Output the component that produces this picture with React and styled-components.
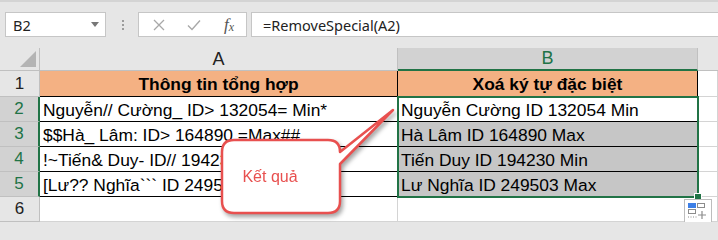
import React from 'react';
import styled, {createGlobalStyle} from 'styled-components';

const GlobalStyle = createGlobalStyle`
  body {
    margin: 0;
    background: #e6e6e6;
    font-family: "Liberation Sans", Arial, sans-serif;
    overflow: hidden;
  }
`

const GREEN = '#217346';
const RED = '#e8504f';

const rowsA = [
  'Nguyễn// Cường_ ID> 132054= Min*',
  '$$Hà_ Lâm: ID> 164890 =Max##',
  '!~Tiến& Duy- ID// 194230 Min',
  '[Lư?? Nghĩa``` ID 249503 Max',
];

const rowsB = [
  'Nguyễn Cường ID 132054 Min',
  'Hà Lâm ID 164890 Max',
  'Tiến Duy ID 194230 Min',
  'Lư Nghĩa ID 249503 Max',
];

function QuickAnalysis() {
  return (
    <QuickBox>
      <svg width="24" height="20" viewBox="0 0 24 20">
        <rect x="2" y="2" width="8" height="5" fill="#3d7fe6" />
        <rect x="11.5" y="2.5" width="7" height="4" fill="none" stroke="#8c8c8c" />
        <rect x="2.5" y="8.5" width="7" height="4" fill="none" stroke="#8c8c8c" />
        <path d="M2 16h1M4.5 16h1M7 16h1M9.5 16h1" stroke="#8c8c8c" />
        <path d="M16 10v8M12 14h8" stroke="#8c8c8c" strokeWidth="1.2" />
      </svg>
    </QuickBox>
  )
}

function Callout() {
  return (
    <CalloutWrap>
      <svg width="190" height="120" viewBox="0 0 190 120">
        <path
          d="M20 37 H114 Q126 37 126 49 L179 7 L126 61 V98 Q126 110 114 110 H20 Q8 110 8 98 V49 Q8 37 20 37 Z"
          fill="#fff"
          stroke={RED}
          strokeWidth="2.5"
          strokeLinejoin="round"
        />
        <text x="56" y="79" textAnchor="middle" fill={RED} fontSize="16" fontFamily="Liberation Sans, Arial, sans-serif">Kết quả</text>
      </svg>
    </CalloutWrap>
  )
}

export default function App() {
  return (
    <>
      <GlobalStyle />
      <FormulaBar>
        <NameBox>
          <span>B2</span>
          <Caret />
        </NameBox>
        <Dots />
        <ButtonGroup>
          <svg width="12" height="12" viewBox="0 0 12 12">
            <path d="M1 1L11 11M11 1L1 11" stroke="#a8a8a8" strokeWidth="1.3" />
          </svg>
          <svg width="14" height="12" viewBox="0 0 14 12">
            <path d="M1 6.5L5 10.5L13 1.5" stroke="#a8a8a8" strokeWidth="1.4" fill="none" />
          </svg>
          <Fx>f<sub>x</sub></Fx>
        </ButtonGroup>
        <FormulaInput>=RemoveSpecial(A2)</FormulaInput>
      </FormulaBar>

      <Sheet>
        <Corner />
        <ColHead>A</ColHead>
        <ColHead $selected>B</ColHead>
        <ColHead $last />

        <RowHead>1</RowHead>
        <Cell $boxed $fill="#f4b183" $bold $center>Thông tin tổng hợp</Cell>
        <Cell $boxed $fill="#f4b183" $bold $center>Xoá ký tự đặc biệt</Cell>
        <Cell />

        {rowsA.map((text, i) => (
          <React.Fragment key={i}>
            <RowHead $selected>{i + 2}</RowHead>
            <Cell $boxed>{text}</Cell>
            <Cell $boxed $fill={i === 0 ? '#fff' : '#c6c6c6'}>{rowsB[i]}</Cell>
            <Cell />
          </React.Fragment>
        ))}

        <RowHead>6</RowHead>
        <Cell />
        <Cell />
        <Cell />

        <Selection>
          <FillHandle />
        </Selection>
        <QuickAnalysis />
        <Callout />
      </Sheet>
    </>
  )
}

const FormulaBar = styled.div`
  display: flex;
  align-items: flex-start;
  height: 48px;
  box-sizing: border-box;
  padding: 12px 0 0 5px;
  border-top: 2px solid #d4d4d4;
  background: #e6e6e6;
  font-family: "Noto Sans", "Open Sans", sans-serif;
  font-size: 14.5px;
  color: #222;
`

const NameBox = styled.div`
  display: flex;
  align-items: center;
  justify-content: space-between;
  box-sizing: border-box;
  width: 101px;
  height: 25px;
  margin-top: -2px;
  padding: 0 6px 0 7px;
  background: #fff;
  border: 1px solid #c6c6c6;
`

const Caret = styled.span`
  width: 0;
  height: 0;
  border-left: 4px solid transparent;
  border-right: 4px solid transparent;
  border-top: 5px solid #777;
`

const Dots = styled.div`
  width: 0;
  height: 10px;
  margin: 6px 14px 0 16px;
  border-left: 2px dotted #9c9c9c;
`

const ButtonGroup = styled.div`
  display: flex;
  align-items: center;
  gap: 22px;
  box-sizing: border-box;
  width: 109px;
  height: 25px;
  margin-top: -2px;
  padding: 0 0 0 14px;
  background: #fff;
  border: 1px solid #c6c6c6;
`

const Fx = styled.span`
  margin-left: 1px;
  font-family: "Liberation Serif", "DejaVu Serif", serif;
  font-style: italic;
  font-size: 17px;
  color: #555;
  sub {
    font-size: 12px;
    vertical-align: -1px;
  }
`

const FormulaInput = styled.div`
  flex: 1;
  display: flex;
  align-items: center;
  box-sizing: border-box;
  height: 25px;
  margin: -2px 0 0 4px;
  padding-left: 11px;
  background: #fff;
  border: 1px solid #c6c6c6;
  border-right: none;
`

const Sheet = styled.div`
  position: relative;
  display: grid;
  grid-template-columns: 40px 358px 300px 1fr;
  grid-template-rows: 23px 26px 25px 25px 25px 25px 25px;
  background: #fff;
  font-size: 17.4px;
  color: #000;
`

const Corner = styled.div`
  position: relative;
  background: #e6e6e6;
  border-right: 1px solid #c0c0c0;
  border-bottom: 1px solid #c0c0c0;
  &::after {
    content: '';
    position: absolute;
    right: 3px;
    bottom: 3px;
    width: 0;
    height: 0;
    border-left: 16px solid transparent;
    border-bottom: 16px solid #b4b4b4;
  }
`

const ColHead = styled.div`
  display: flex;
  align-items: center;
  justify-content: center;
  background: ${p => p.$selected ? '#d2d2d2' : '#e6e6e6'};
  color: ${p => p.$selected ? GREEN : '#222'};
  border-right: ${p => p.$last ? 'none' : '1px solid #c0c0c0'};
  border-bottom: ${p => p.$selected ? `2px solid ${GREEN}` : '1px solid #c0c0c0'};
  box-sizing: border-box;
  font-size: 18px;
`

const RowHead = styled.div`
  display: flex;
  align-items: center;
  justify-content: center;
  box-sizing: border-box;
  background: ${p => p.$selected ? '#d2d2d2' : '#e6e6e6'};
  color: ${p => p.$selected ? GREEN : '#222'};
  border-right: ${p => p.$selected ? `2px solid ${GREEN}` : '1px solid #c0c0c0'};
  border-bottom: 1px solid #c0c0c0;
  font-size: 17px;
`

const Cell = styled.div`
  display: flex;
  align-items: center;
  justify-content: ${p => p.$center ? 'center' : 'flex-start'};
  box-sizing: border-box;
  padding-left: ${p => p.$center ? '0' : '3px'};
  padding-top: 2px;
  background: ${p => p.$fill || '#fff'};
  font-weight: ${p => p.$bold ? 'bold' : 'normal'};
  white-space: nowrap;
  overflow: hidden;
  border-right: 1px solid ${p => p.$boxed ? '#000' : '#d4d4d4'};
  border-bottom: 1px solid ${p => p.$boxed ? '#000' : '#d4d4d4'};
`

const Selection = styled.div`
  position: absolute;
  left: 397px;
  top: 48px;
  width: 302px;
  height: 102px;
  box-sizing: border-box;
  border: 2px solid ${GREEN};
  pointer-events: none;
`

const FillHandle = styled.div`
  position: absolute;
  right: -5px;
  bottom: -5px;
  width: 6px;
  height: 6px;
  background: ${GREEN};
  border: 1px solid #fff;
`

const QuickBox = styled.div`
  position: absolute;
  left: 684px;
  top: 151px;
  width: 28px;
  height: 24px;
  box-sizing: border-box;
  display: flex;
  align-items: center;
  justify-content: center;
  background: #fff;
  border: 1px solid #bdbdbd;
`

const CalloutWrap = styled.div`
  position: absolute;
  left: 214px;
  top: 55px;
  width: 190px;
  height: 120px;
  filter: drop-shadow(2px 3px 2px rgba(0, 0, 0, 0.35));
`
